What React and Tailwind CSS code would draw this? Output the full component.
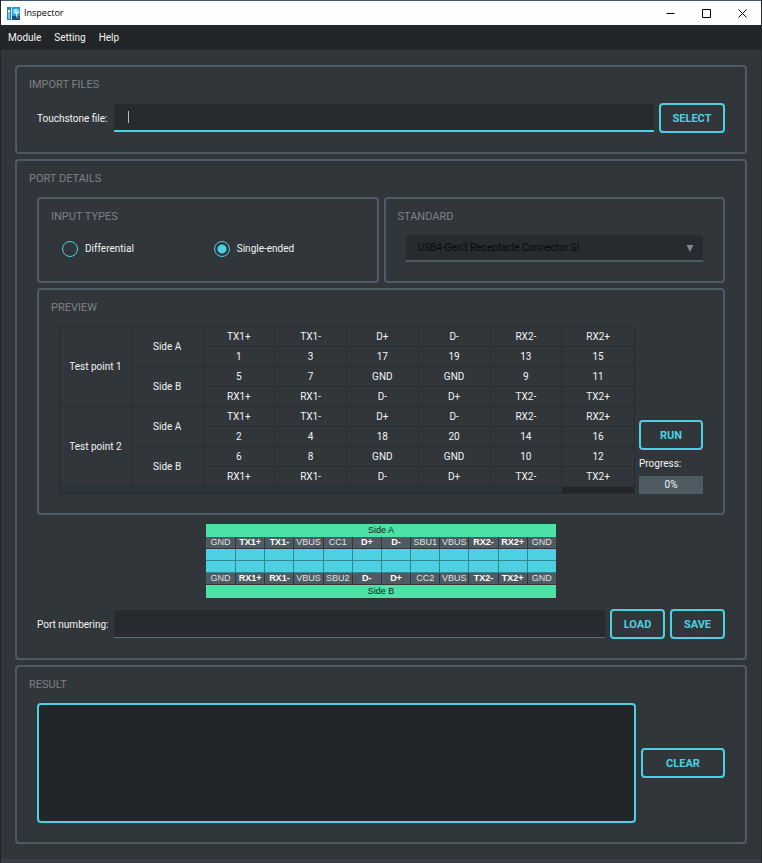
import React, { useState } from 'react';
import clsx from 'clsx';

const MENU_ITEMS = ['Module', 'Setting', 'Help'];

const STANDARDS = ['USB4-Gen3 Receptacle Connector SI'];

const TEST_POINTS = [
  {
    name: 'Test point 1',
    sides: [
      {
        name: 'Side A',
        rows: [
          ['TX1+', 'TX1-', 'D+', 'D-', 'RX2-', 'RX2+'],
          ['1', '3', '17', '19', '13', '15'],
        ],
      },
      {
        name: 'Side B',
        rows: [
          ['5', '7', 'GND', 'GND', '9', '11'],
          ['RX1+', 'RX1-', 'D-', 'D+', 'TX2-', 'TX2+'],
        ],
      },
    ],
  },
  {
    name: 'Test point 2',
    sides: [
      {
        name: 'Side A',
        rows: [
          ['TX1+', 'TX1-', 'D+', 'D-', 'RX2-', 'RX2+'],
          ['2', '4', '18', '20', '14', '16'],
        ],
      },
      {
        name: 'Side B',
        rows: [
          ['6', '8', 'GND', 'GND', '10', '12'],
          ['RX1+', 'RX1-', 'D-', 'D+', 'TX2-', 'TX2+'],
        ],
      },
    ],
  },
];

const PINS_A = ['GND', 'TX1+', 'TX1-', 'VBUS', 'CC1', 'D+', 'D-', 'SBU1', 'VBUS', 'RX2-', 'RX2+', 'GND'];
const PINS_B = ['GND', 'RX1+', 'RX1-', 'VBUS', 'SBU2', 'D-', 'D+', 'CC2', 'VBUS', 'TX2-', 'TX2+', 'GND'];

const isSignal = (pin) => /[+-]$/.test(pin);

const AppIcon = () => (
  <svg viewBox="0 0 13 13" className="w-[13px] h-[13px]" aria-hidden="true">
    <rect width="13" height="13" fill="#2b9ccf" />
    <rect width="4" height="13" fill="#1b86bf" />
    <rect x="4" width="1" height="13" fill="#c9ebf8" />
    <rect x="5" y="9" width="8" height="4" fill="#14507f" />
    <circle cx="9" cy="4.5" r="3" fill="#8fd3f0" />
    <path d="M2 5v7" stroke="#e8f7fd" fill="none" />
    <circle cx="2" cy="4" r="1.2" fill="#e8f7fd" />
    <path d="M7 3.5h2.5M8 5.5h4M9.5 6v3.5l2 1.5" stroke="#d5f0fb" fill="none" />
  </svg>
);

const TitleBar = () => (
  <header className="flex items-center justify-between h-[25px] pl-1.5 pr-px bg-white border-t border-[#44546a]">
    <div className="flex items-center gap-1">
      <AppIcon />
      <h1 className="font-['Open_Sans',sans-serif] text-[9px] leading-4 text-black">Inspector</h1>
    </div>
    <div className="flex h-full text-black">
      <button aria-label="Minimize" className="w-9 flex items-center justify-center">
        <svg viewBox="0 0 9 9" className="w-[9px] h-[9px]" stroke="currentColor" fill="none">
          <path d="M0.5 4.5h8" />
        </svg>
      </button>
      <button aria-label="Maximize" className="w-9 flex items-center justify-center">
        <svg viewBox="0 0 9 9" className="w-[9px] h-[9px]" stroke="currentColor" fill="none">
          <path d="M0.5 0.5h8v8h-8z" />
        </svg>
      </button>
      <button aria-label="Close" className="w-9 flex items-center justify-center">
        <svg viewBox="0 0 9 9" className="w-[9px] h-[9px]" stroke="currentColor" fill="none">
          <path d="M0.5 0.5l8 8M8.5 0.5l-8 8" />
        </svg>
      </button>
    </div>
  </header>
);

const Panel = ({ title, className, children }) => (
  <section className={clsx('border-2 border-[#4f5b62] rounded pt-2.5 pb-[19px] px-3', className)}>
    <h2 className="mb-2.5 text-[11px] leading-4 text-[#7c8185] uppercase">{title}</h2>
    <div className="px-2">{children}</div>
  </section>
);

const OutlineButton = ({ className, children, ...props }) => (
  <button
    className={clsx(
      'h-[30px] pt-px shrink-0 border-2 border-[#4dd0e1] rounded text-[11px] leading-4 font-bold text-[#4dd0e1] uppercase',
      className
    )}
    {...props}
  >
    {children}
  </button>
);

const RadioOption = ({ label, checked, onChange }) => (
  <label className="flex items-center gap-[7px] pl-[3px]">
    <input
      type="radio"
      name="inputType"
      checked={checked}
      onChange={onChange}
      className="appearance-none w-4 h-4 rounded-full border border-[#4dd0e1] checked:bg-[radial-gradient(circle,#4dd0e1_4px,transparent_5px)]"
    />
    <span>{label}</span>
  </label>
);

const PreviewTable = () => (
  <div className="flex-1 min-w-0 border border-[#272b2f] rounded overflow-hidden">
    <table className="w-full table-fixed border-separate border-spacing-0 text-center">
      <tbody>
        {TEST_POINTS.map((point) =>
          point.sides.map((side, s) =>
            side.rows.map((row, r) => (
              <tr key={`${point.name}-${side.name}-${r}`} className="h-5">
                {s === 0 && r === 0 && (
                  <th rowSpan={4} scope="rowgroup" className="p-0 font-normal border-r border-b border-[#2a2e33]">
                    {point.name}
                  </th>
                )}
                {r === 0 && (
                  <th rowSpan={2} scope="rowgroup" className="p-0 font-normal border-r border-b border-[#2a2e33]">
                    {side.name}
                  </th>
                )}
                {row.map((cell, c) => (
                  <td key={c} className="p-0 pt-px border-r border-b border-[#2a2e33] last:border-r-0">
                    {cell}
                  </td>
                ))}
              </tr>
            ))
          )
        )}
      </tbody>
    </table>
    {/* Horizontal scroll position */}
    <div className="h-1.5 bg-[#232629]">
      <div className="w-7/8 h-full bg-[#2a353b]" />
    </div>
  </div>
);

const PinRow = ({ pins }) => (
  <tr className="h-3 bg-[#4f5b62] text-white">
    {pins.map((pin, i) => (
      <td
        key={i}
        className={clsx(
          'p-0 border-l border-b border-[#31363b] first:border-l-0',
          isSignal(pin) ? 'font-bold' : 'text-[#dfe3e5]'
        )}
      >
        {pin}
      </td>
    ))}
  </tr>
);

const EmptyPinRow = () => (
  <tr className="h-3 bg-[#4dd0e1]">
    {PINS_A.map((_, i) => (
      <td key={i} className="p-0 border-l border-b border-[#2f8794] first:border-l-0" />
    ))}
  </tr>
);

const ConnectorPinout = () => (
  <table className="w-[350px] mx-auto table-fixed border-separate border-spacing-0 text-center font-['Liberation_Sans',sans-serif] text-[9px] leading-[11px]">
    <tbody>
      <tr className="h-[13px] bg-[#4de2a5] text-[#10241d]">
        <th colSpan={12} className="p-0 font-normal">Side A</th>
      </tr>
      <PinRow pins={PINS_A} />
      <EmptyPinRow />
      <EmptyPinRow />
      <PinRow pins={PINS_B} />
      <tr className="h-[13px] bg-[#4de2a5] text-[#10241d]">
        <th colSpan={12} className="p-0 font-normal">Side B</th>
      </tr>
    </tbody>
  </table>
);

const App = () => {
  const [inputType, setInputType] = useState('single');
  const [touchstoneFile, setTouchstoneFile] = useState('');
  const [portNumbering, setPortNumbering] = useState('');
  const [result, setResult] = useState('');
  const progress = 0;

  return (
    <div className="min-h-screen flex flex-col bg-[#31363b] border-x border-[#22272b] font-[Roboto,sans-serif] text-[10px] leading-4 text-[#f2f3f3]">
      <TitleBar />

      <nav className="flex items-center gap-[13px] h-[25px] px-[7px] bg-[#232629]">
        {MENU_ITEMS.map((item) => (
          <button key={item}>{item}</button>
        ))}
      </nav>

      <main className="flex-1 flex flex-col gap-[5px] py-[15px] px-3.5">
        <Panel title="Import files">
          <div className="flex items-center gap-[5px]">
            <label htmlFor="touchstone" className="w-18 shrink-0 pt-0.5">Touchstone file:</label>
            <div className="relative flex-1">
              <input
                id="touchstone"
                type="text"
                value={touchstoneFile}
                onChange={(e) => setTouchstoneFile(e.target.value)}
                className="block w-full h-7 px-3.5 bg-[#272a2e] border-b-2 border-[#4dd0e1] rounded-t outline-none"
              />
              {!touchstoneFile && <span className="absolute left-3.5 top-[7px] w-px h-3 bg-[#b9bcbe]" />}
            </div>
            <OutlineButton className="w-[66px]">Select</OutlineButton>
          </div>
        </Panel>

        <Panel title="Port details">
          <div className="grid grid-cols-2 gap-[5px]">
            <Panel title="Input types">
              <div className="grid grid-cols-2 gap-1.5 h-[27px]">
                <RadioOption
                  label="Differential"
                  checked={inputType === 'differential'}
                  onChange={() => setInputType('differential')}
                />
                <RadioOption
                  label="Single-ended"
                  checked={inputType === 'single'}
                  onChange={() => setInputType('single')}
                />
              </div>
            </Panel>
            <Panel title="Standard">
              <div className="relative">
                <select
                  aria-label="Standard"
                  disabled
                  className="appearance-none block w-full h-[27px] px-3 bg-[#272a2e] border-b-2 border-[#4f5b62] rounded-t text-[#08090a]"
                >
                  {STANDARDS.map((name) => (
                    <option key={name}>{name}</option>
                  ))}
                </select>
                <svg viewBox="0 0 8 7" className="absolute right-[9px] top-2.5 w-2 h-[7px]" fill="#7f868b">
                  <path d="M0.5 0h7L4 7z" />
                </svg>
              </div>
            </Panel>
          </div>

          <Panel title="Preview" className="mt-[5px]">
            <div className="flex items-end gap-1">
              <PreviewTable />
              <div className="w-16 shrink-0 flex flex-col">
                <OutlineButton>Run</OutlineButton>
                <span id="progress-label" className="mt-1.5 mb-1">Progress:</span>
                <div
                  role="progressbar"
                  aria-labelledby="progress-label"
                  aria-valuenow={progress}
                  className="h-[18px] flex items-center justify-center bg-[#4f5b62]"
                >
                  {progress}%
                </div>
              </div>
            </div>
          </Panel>

          <div className="mt-[9px]">
            <ConnectorPinout />
          </div>

          <div className="flex items-center gap-[5px] mt-[11px]">
            <label htmlFor="ports" className="w-18 shrink-0 pt-0.5">Port numbering:</label>
            <input
              id="ports"
              type="text"
              value={portNumbering}
              onChange={(e) => setPortNumbering(e.target.value)}
              className="flex-1 min-w-0 h-7 px-3.5 bg-[#272a2e] border-b border-[#5f6a70] rounded-t outline-none"
            />
            <OutlineButton className="w-[55px]">Load</OutlineButton>
            <OutlineButton className="w-[55px]">Save</OutlineButton>
          </div>
        </Panel>

        <Panel title="Result">
          <div className="flex items-center gap-[5px]">
            <textarea
              aria-label="Result"
              value={result}
              onChange={(e) => setResult(e.target.value)}
              className="flex-1 min-w-0 h-[120px] p-2 bg-[#232629] border-2 border-[#4dd0e1] rounded resize-none outline-none"
            />
            <OutlineButton className="w-[84px]" onClick={() => setResult('')}>
              Clear
            </OutlineButton>
          </div>
        </Panel>
      </main>

      <footer className="h-1 bg-[#393e46]" />
    </div>
  );
};

export default App;
